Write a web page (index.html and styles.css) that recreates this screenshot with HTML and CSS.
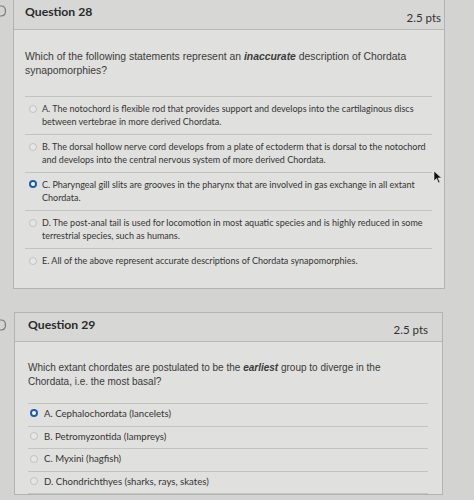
FILE: index.html
```html
<!DOCTYPE html>
<html>
<head>
<meta charset="utf-8">
<link rel="stylesheet" href="styles.css">
</head>
<body>
<div class="page">
  <div class="qrow q28">
    <svg class="flag" width="14" height="14" viewBox="0 0 14 14"><path d="M0.5 2 H7 Q11.5 2 11.5 7 Q11.5 12 7 12 H0.5" fill="none" stroke="#7a7a78" stroke-width="1.2"/></svg>
    <div class="card card1">
      <div class="head">
        <span class="title">Question 28</span>
        <span class="pts">2.5 pts</span>
      </div>
      <div class="body">
        <p class="qtext">Which of the following statements represent an <b><i>inaccurate</i></b> description of Chordata synapomorphies?</p>
        <ul class="opts">
          <li><span class="radio"></span><span class="label">A. The notochord is flexible rod that provides support and develops into the cartilaginous discs between vertebrae in more derived Chordata.</span></li>
          <li><span class="radio"></span><span class="label">B. The dorsal hollow nerve cord develops from a plate of ectoderm that is dorsal to the notochord and develops into the central nervous system of more derived Chordata.</span></li>
          <li><span class="radio on"></span><span class="label">C. Pharyngeal gill slits are grooves in the pharynx that are involved in gas exchange in all extant Chordata.</span></li>
          <li><span class="radio"></span><span class="label">D. The post-anal tail is used for locomotion in most aquatic species and is highly reduced in some terrestrial species, such as humans.</span></li>
          <li class="last"><span class="radio"></span><span class="label">E. All of the above represent accurate descriptions of Chordata synapomorphies.</span></li>
        </ul>
      </div>
    </div>
  </div>
  <div class="qrow q29">
    <svg class="flag" width="14" height="14" viewBox="0 0 14 14"><path d="M0.5 2 H7 Q11.5 2 11.5 7 Q11.5 12 7 12 H0.5" fill="none" stroke="#7a7a78" stroke-width="1.2"/></svg>
    <div class="card card2">
      <div class="head">
        <span class="title">Question 29</span>
        <span class="pts">2.5 pts</span>
      </div>
      <div class="body">
        <p class="qtext">Which extant chordates are postulated to be the <b><i>earliest</i></b> group to diverge in the Chordata, i.e. the most basal?</p>
        <ul class="opts single">
          <li><span class="radio on"></span><span class="label">A. Cephalochordata (lancelets)</span></li>
          <li><span class="radio"></span><span class="label">B. Petromyzontida (lampreys)</span></li>
          <li><span class="radio"></span><span class="label">C. Myxini (hagfish)</span></li>
          <li><span class="radio"></span><span class="label">D. Chondrichthyes (sharks, rays, skates)</span></li>
        </ul>
      </div>
    </div>
  </div>
  <svg class="cursor" width="10" height="14" viewBox="0 0 10 14"><path d="M1 1 L1 11 L3.5 8.5 L5.5 13 L7 12.3 L5 8 L8.5 8 Z" fill="#111" stroke="#eee" stroke-width="0.6"/></svg>
</div>
</body>
</html>
```
FILE: styles.css
```css
html, body {
  margin: 0;
  padding: 0;
  background: #d3d3d1;
  overflow: hidden;
}
.page {
  position: relative;
  width: 474px;
  height: 500px;
  overflow: hidden;
}
.qrow {
  display: flex;
  align-items: flex-start;
}
.flag {
  flex: none;
  margin-left: -6px;
  margin-top: 5px;
}
.q28 {
  margin-top: -1px;
}
.q28 .card {
  margin-left: 5px;
  width: 430px;
}
.q29 {
  margin-top: 23px;
}
.q29 .flag {
  margin-top: 6px;
}
.q29 .card {
  margin-left: 6px;
  width: 427px;
}
.card {
  border: 1px solid #b3b3b1;
  background: #e0e0de;
}
.head {
  display: flex;
  justify-content: space-between;
  align-items: flex-start;
  height: 30px;
  box-sizing: border-box;
  background: #d7d7d5;
  border-bottom: 1px solid #b8b8b6;
  padding: 4px 3px 0 11px;
  font-family: Lato, "Liberation Sans", sans-serif;
  color: #2a2a2a;
}
.card2 .head {
  height: 29px;
  padding: 4px 14px 0 13px;
}
.title {
  font-size: 12.2px;
  font-weight: bold;
  line-height: 16px;
}
.pts {
  font-size: 11.5px;
  line-height: 15px;
  padding-top: 6px;
  color: #333;
}
.card2 .pts {
  padding-top: 5px;
}
.body {
  padding: 20px 12px 15px 11px;
}
.card2 .body {
  padding: 19px 14px 0 13px;
}
.qtext {
  margin: 0 -6px 0 0;
  font-family: "Liberation Sans", Arial, sans-serif;
  font-size: 10.4px;
  line-height: 14px;
  color: #3a3a3a;
}
.card2 .qtext {
  margin: 0;
  font-size: 10px;
  padding-right: 30px;
}
.opts {
  list-style: none;
  margin: 18px 0 0 0;
  padding: 0;
  border-top: 1px solid #c3c3c1;
}
.card2 .opts {
  margin-top: 14px;
}
.opts li {
  display: flex;
  align-items: flex-start;
  padding: 5px 0 6px 4px;
  border-bottom: 1px solid #c3c3c1;
  font-family: Lato, "Liberation Sans", sans-serif;
  font-size: 9px;
  line-height: 13px;
  color: #343434;
}
.opts li.last {
  border-bottom: none;
}
.opts.single li {
  padding: 3px 0 5.5px 2px;
  font-size: 9.6px;
}
.radio {
  flex: none;
  width: 6px;
  height: 6px;
  border: 1px solid #c2c2c0;
  border-radius: 50%;
  background: #e6e6e4;
  margin-top: 2.5px;
  margin-right: 5px;
}
.radio.on {
  width: 4px;
  height: 4px;
  border: 2.5px solid #1d5bb0;
  background: #fff;
  margin-top: 2px;
}
.single .radio {
  margin-right: 6px;
}
.cursor {
  position: absolute;
  left: 433px;
  top: 170px;
}
```
